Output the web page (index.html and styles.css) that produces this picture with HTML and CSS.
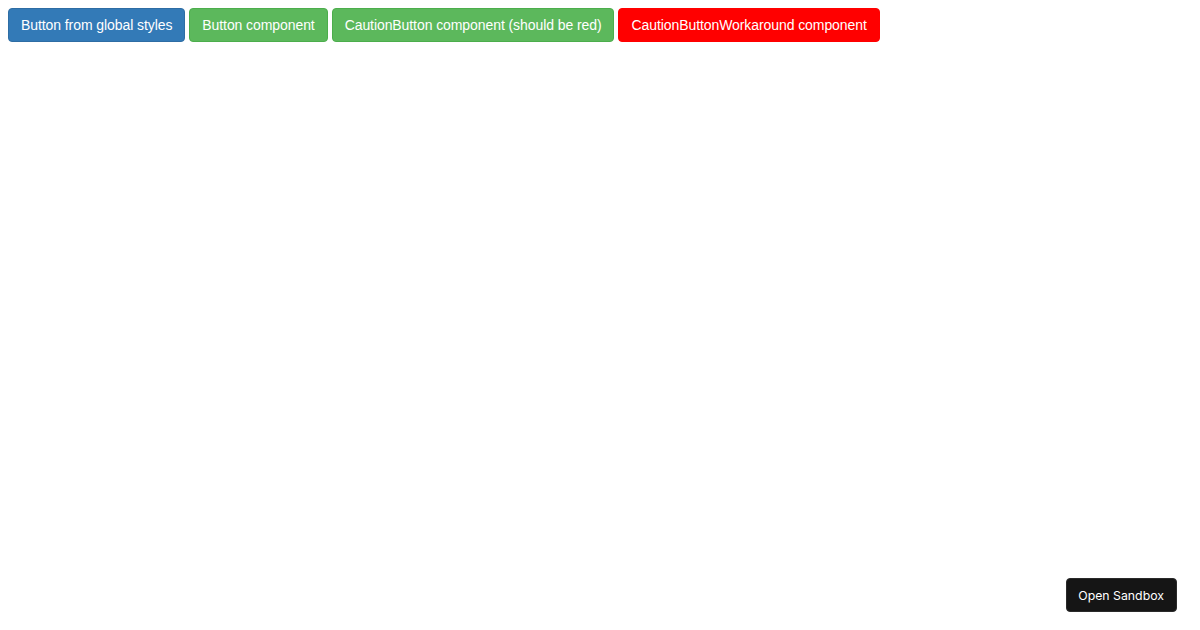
FILE: index.html
```html
<!DOCTYPE html>
<html>
<head>
<meta charset="utf-8">
<link rel="stylesheet" href="styles.css">
</head>
<body>
<div class="row">
  <button class="btn btn-primary">Button from global styles</button>
  <button class="btn btn-success">Button component</button>
  <button class="btn btn-success">CautionButton component (should be red)</button>
  <button class="btn btn-caution">CautionButtonWorkaround component</button>
</div>
<a class="sandbox">Open Sandbox</a>
</body>
</html>
```

FILE: styles.css
```css
html, body { margin: 0; background: #fff; }
body { padding: 8px; font-family: "Liberation Sans", Arial, sans-serif; }
.row { display: flex; gap: 4px; align-items: flex-start; }
.btn {
  font-family: "Liberation Sans", Arial, sans-serif;
  font-size: 14px;
  letter-spacing: -0.08px;
  line-height: 20px;
  padding: 6px 12px;
  border: 1px solid transparent;
  border-radius: 4px;
  color: #fff;
  cursor: pointer;
  white-space: nowrap;
  margin: 0;
}
.btn-primary { background: #337ab7; border-color: #2e6da4; }
.btn-success { background: #5cb85c; border-color: #4cae4c; }
.btn-caution { background: #ff0000; border-color: #ff0000; }
.sandbox {
  position: fixed;
  right: 23px;
  bottom: 18px;
  height: 34px;
  box-sizing: border-box;
  padding: 0 12px 0 11px;
  display: flex;
  align-items: center;
  background: #151515;
  color: #fff;
  font-family: Inter, "Liberation Sans", sans-serif;
  font-size: 12.3px;
  border-radius: 4px;
  border: 1px solid #2a2a2a;
}
```
